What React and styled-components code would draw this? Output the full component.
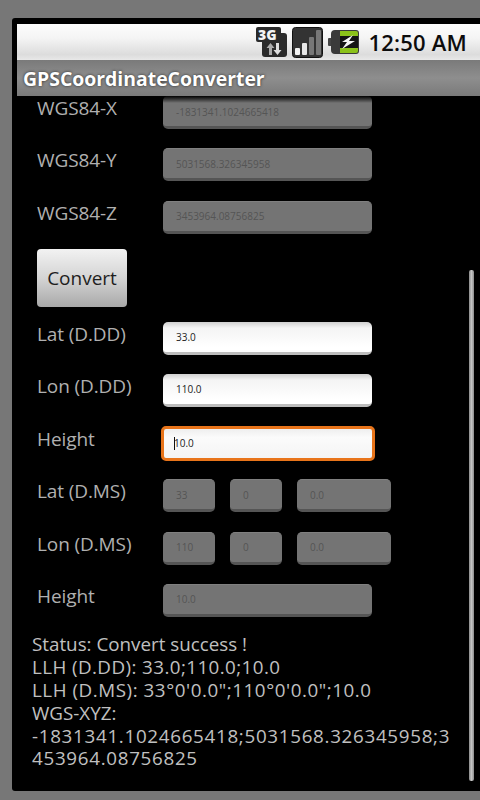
import React from 'react';
import styled, { createGlobalStyle } from 'styled-components';

const GlobalStyle = createGlobalStyle`
  html, body {
    margin: 0;
    padding: 0;
    background: #777777;
  }
`

const Frame = styled.div`
  width: 468px;
  height: 773px;
  margin: 18px 0 0 12px;
  padding: 6px 0 0 5px;
  box-sizing: border-box;
  background: #000;
  border-radius: 3px 0 0 3px;
  display: flex;
  flex-direction: column;
  font-family: "Open Sans", "Noto Sans", sans-serif;
  overflow: hidden;
`

const StatusBar = styled.div`
  height: 36px;
  flex: none;
  display: flex;
  align-items: center;
  justify-content: flex-end;
  padding-right: 13px;
  background: linear-gradient(#fdfdfd 0%, #f4f4f4 40%, #dcdcdc 85%, #e8e8e8 100%);
`

const Clock = styled.span`
  font-size: 22px;
  font-weight: 600;
  color: #0c0c0c;
  margin-left: 9px;
  letter-spacing: 0.2px;
`

const StatusIcon = styled.svg`
  display: block;
  flex: none;
  margin-left: ${({ $gap }) => $gap || 0}px;
`

const TitleBar = styled.div`
  height: 36px;
  flex: none;
  display: flex;
  align-items: center;
  padding-left: 6px;
  background: linear-gradient(#7a7a7a, #8e8e8e 50%, #7a7a7a);
  color: #fff;
  font-size: 19.4px;
  font-weight: 700;
  text-shadow: 0 0 3px #222;
`

const Scroller = styled.div`
  flex: 1;
  position: relative;
  overflow: hidden;
  min-height: 0;

  &::before {
    content: '';
    position: absolute;
    left: 0;
    right: 0;
    top: 0;
    height: 7px;
    background: linear-gradient(#000, rgba(0, 0, 0, 0));
  }
`

const Content = styled.div`
  padding: 0 0 0 20px;
  display: flex;
  flex-direction: column;
`

const Row = styled.div`
  height: 33px;
  margin-bottom: 19.4px;
  display: flex;
  align-items: flex-start;
`

const Label = styled.div`
  width: 126px;
  flex: none;
  font-size: 19px;
  line-height: 26px;
  margin-top: -1px;
  color: #b0b0b0;
  letter-spacing: -0.1px;
`

const Fields = styled.div`
  display: flex;
  gap: 15px;
`

const Field = styled.div`
  width: ${({ $w }) => $w}px;
  height: 33px;
  box-sizing: border-box;
  padding-left: 13px;
  display: flex;
  align-items: center;
  font-size: 10px;
  border-radius: 5px;
  ${({ $variant }) => $variant === 'disabled' && `
    background: #747474;
    border-top: 1px solid #808080;
    border-bottom: 3px solid #555;
    color: #555;
  `}
  ${({ $variant }) => $variant === 'active' && `
    background: linear-gradient(#d0d0d0, #f4f4f4 20%, #ffffff 85%);
    border-bottom: 3px solid #bdbdbd;
    color: #222;
  `}
  ${({ $variant }) => $variant === 'focused' && `
    background: linear-gradient(#eeeeee, #fbfbfb 30%, #f4f4f4);
    border: 3px solid #e8741a;
    padding-left: 10px;
    color: #222;
    height: 35px;
    margin: -1px 0 0 -2px;
  `}
`

const Caret = styled.span`
  display: inline-block;
  width: 1px;
  height: 13px;
  background: #111;
  margin-right: -1px;
`

const ConvertButton = styled.button`
  display: block;
  flex: none;
  width: 90px;
  height: 58px;
  margin: -4px 0 14.8px 0;
  padding: 0;
  border: none;
  border-radius: 4px;
  background: linear-gradient(#f2f2f2, #d4d4d4 50%, #a9a9a9);
  color: #1e1e1e;
  font-family: inherit;
  font-size: 19px;
`

const StatusText = styled.div`
  margin: -3px 0 0 -5px;
  width: 424px;
  font-size: 18.8px;
  line-height: 22.8px;
  color: #c0c0c0;
  word-break: break-all;
`

const NumberLine = styled.div`
  letter-spacing: ${({ $spacing }) => $spacing}px;
`

const ScrollThumb = styled.div`
  position: absolute;
  left: 452px;
  top: 174px;
  width: 5px;
  height: 511px;
  border-radius: 2px;
  background: linear-gradient(90deg, #8a8a8a, #c4c4c4 50%, #8a8a8a);
`

const NetworkIcon = () => (
  <StatusIcon width="31" height="31" viewBox="0 0 31 31">
    <rect x="6" y="6" width="25" height="24" rx="3" fill="#2a2a2a" />
    <rect x="0" y="0" width="25" height="15" rx="2" fill="#2a2a2a" />
    <text x="2" y="13" fontFamily="Open Sans" fontWeight="800" fontSize="14" fill="#f4f4f4">3G</text>
    <path d="M13 28v-7h-2.5l4-5 4 5H16v7z" fill="#aaa" />
    <path d="M20 16v7h-2.5l4 5 4-5H23v-7z" fill="#ddd" />
  </StatusIcon>
)

const SignalIcon = () => (
  <StatusIcon $gap={5} width="31" height="31" viewBox="0 0 31 31">
    <rect x="0.5" y="0.5" width="30" height="30" rx="3" fill="#333" stroke="#111" />
    <rect x="3" y="21" width="5" height="7" rx="1" fill="#f2f2f2" />
    <rect x="10" y="16" width="5" height="12" rx="1" fill="#e8e8e8" />
    <rect x="17" y="10" width="5" height="18" rx="1" fill="#777" />
    <rect x="24" y="3" width="5" height="25" rx="1" fill="#777" />
  </StatusIcon>
)

const BatteryIcon = () => (
  <StatusIcon $gap={5} width="32" height="24" viewBox="0 0 32 24">
    <rect x="0" y="8" width="4" height="8" rx="1" fill="#444" />
    <path d="M7 0h21a3 3 0 0 1 3 3v18a3 3 0 0 1-3 3H7a4 4 0 0 1-4-4V4a4 4 0 0 1 4-4z" fill="#3a3a3a" />
    <path d="M12 1h16a2 2 0 0 1 2 2v18a2 2 0 0 1-2 2H12z" fill="#8bc21a" />
    <rect x="12" y="6" width="18" height="12" fill="#151515" />
    <path d="M25 5l-11 7h5l-5 7 13-8h-6l4-6z" fill="#f6f6f6" />
  </StatusIcon>
)

const topFields = [
  { label: 'WGS84-X', value: '-1831341.1024665418' },
  { label: 'WGS84-Y', value: '5031568.326345958' },
  { label: 'WGS84-Z', value: '3453964.08756825' },
]

const App = () => {
  return (
    <>
      <GlobalStyle />
      <Frame>
        <StatusBar>
          <NetworkIcon />
          <SignalIcon />
          <BatteryIcon />
          <Clock>12:50 AM</Clock>
        </StatusBar>
        <TitleBar>GPSCoordinateConverter</TitleBar>
        <Scroller>
          <Content>
            {topFields.map(row => (
              <Row key={row.label}>
                <Label>{row.label}</Label>
                <Field $w={209} $variant="disabled">{row.value}</Field>
              </Row>
            ))}
            <ConvertButton>Convert</ConvertButton>
            <Row>
              <Label>Lat (D.DD)</Label>
              <Field $w={209} $variant="active">33.0</Field>
            </Row>
            <Row>
              <Label>Lon (D.DD)</Label>
              <Field $w={209} $variant="active">110.0</Field>
            </Row>
            <Row>
              <Label>Height</Label>
              <Field $w={214} $variant="focused"><Caret />10.0</Field>
            </Row>
            <Row>
              <Label>Lat (D.MS)</Label>
              <Fields>
                <Field $w={52} $variant="disabled">33</Field>
                <Field $w={52} $variant="disabled">0</Field>
                <Field $w={94} $variant="disabled">0.0</Field>
              </Fields>
            </Row>
            <Row>
              <Label>Lon (D.MS)</Label>
              <Fields>
                <Field $w={52} $variant="disabled">110</Field>
                <Field $w={52} $variant="disabled">0</Field>
                <Field $w={94} $variant="disabled">0.0</Field>
              </Fields>
            </Row>
            <Row>
              <Label>Height</Label>
              <Field $w={209} $variant="disabled">10.0</Field>
            </Row>
            <StatusText>
              <NumberLine $spacing={0}>Status: Convert success !</NumberLine>
              <NumberLine $spacing={0.42}>LLH (D.DD): 33.0;110.0;10.0</NumberLine>
              <NumberLine $spacing={0.55}>LLH (D.MS): 33°0'0.0";110°0'0.0";10.0</NumberLine>
              <NumberLine $spacing={0}>WGS-XYZ:</NumberLine>
              <NumberLine $spacing={0.7}>-1831341.1024665418;5031568.326345958;3453964.08756825</NumberLine>
            </StatusText>
          </Content>
          <ScrollThumb />
        </Scroller>
      </Frame>
    </>
  )
}

export default App;
